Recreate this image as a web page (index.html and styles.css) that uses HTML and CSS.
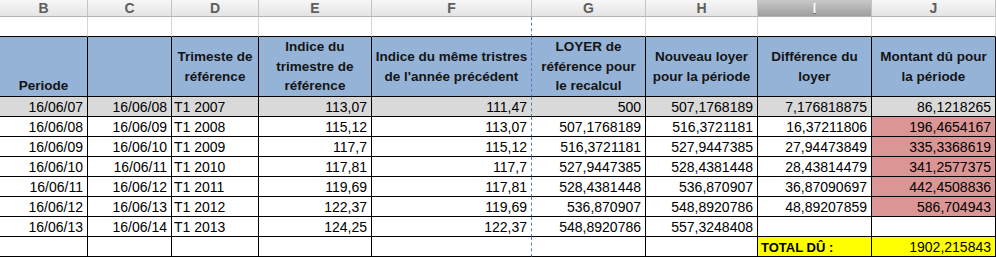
FILE: index.html
```html
<!DOCTYPE html>
<html lang="fr">
<head>
<meta charset="utf-8">
<title>Loyer</title>
<link rel="stylesheet" href="styles.css">
</head>
<body>
<div class="sheet">
  <div class="row colheads">
    <div class="ch">B</div><div class="ch">C</div><div class="ch">D</div><div class="ch">E</div><div class="ch">F</div><div class="ch">G</div><div class="ch">H</div><div class="ch sel">I</div><div class="ch">J</div>
  </div>
  <div class="row blank">
    <div class="c"></div><div class="c"></div><div class="c"></div><div class="c"></div><div class="c f"></div><div class="c"></div><div class="c"></div><div class="c"></div><div class="c"></div>
  </div>
  <div class="row head">
    <div class="h bottom">Periode</div>
    <div class="h"></div>
    <div class="h">Trimeste de référence</div>
    <div class="h">Indice du trimestre de référence</div>
    <div class="h f">Indice du même tristres de l'année précédent</div>
    <div class="h">LOYER de référence pour le recalcul</div>
    <div class="h">Nouveau loyer pour la période</div>
    <div class="h">Différence du loyer</div>
    <div class="h">Montant dû pour la période</div>
  </div>
  <div class="row data grey">
    <div class="d">16/06/07</div><div class="d">16/06/08</div><div class="d l">T1 2007</div><div class="d">113,07</div><div class="d f">111,47</div><div class="d">500</div><div class="d">507,1768189</div><div class="d">7,176818875</div><div class="d">86,1218265</div>
  </div>
  <div class="row data">
    <div class="d">16/06/08</div><div class="d">16/06/09</div><div class="d l">T1 2008</div><div class="d">115,12</div><div class="d f">113,07</div><div class="d">507,1768189</div><div class="d">516,3721181</div><div class="d">16,37211806</div><div class="d pink">196,4654167</div>
  </div>
  <div class="row data">
    <div class="d">16/06/09</div><div class="d">16/06/10</div><div class="d l">T1 2009</div><div class="d">117,7</div><div class="d f">115,12</div><div class="d">516,3721181</div><div class="d">527,9447385</div><div class="d">27,94473849</div><div class="d pink">335,3368619</div>
  </div>
  <div class="row data">
    <div class="d">16/06/10</div><div class="d">16/06/11</div><div class="d l">T1 2010</div><div class="d">117,81</div><div class="d f">117,7</div><div class="d">527,9447385</div><div class="d">528,4381448</div><div class="d">28,43814479</div><div class="d pink">341,2577375</div>
  </div>
  <div class="row data">
    <div class="d">16/06/11</div><div class="d">16/06/12</div><div class="d l">T1 2011</div><div class="d">119,69</div><div class="d f">117,81</div><div class="d">528,4381448</div><div class="d">536,870907</div><div class="d">36,87090697</div><div class="d pink">442,4508836</div>
  </div>
  <div class="row data">
    <div class="d">16/06/12</div><div class="d">16/06/13</div><div class="d l">T1 2012</div><div class="d">122,37</div><div class="d f">119,69</div><div class="d">536,870907</div><div class="d">548,8920786</div><div class="d">48,89207859</div><div class="d pink">586,704943</div>
  </div>
  <div class="row data">
    <div class="d">16/06/13</div><div class="d">16/06/14</div><div class="d l">T1 2013</div><div class="d">124,25</div><div class="d f">122,37</div><div class="d">548,8920786</div><div class="d">557,3248408</div><div class="d"></div><div class="d"></div>
  </div>
  <div class="row data">
    <div class="d"></div><div class="d"></div><div class="d"></div><div class="d"></div><div class="d f"></div><div class="d"></div><div class="d"></div><div class="d l yellow total">TOTAL DÛ :</div><div class="d yellow">1902,215843</div>
  </div>
</div>
</body>
</html>
```
FILE: styles.css
```css
html, body {
  margin: 0;
  padding: 0;
  background: #ffffff;
}

body {
  font-family: "Liberation Sans", Arial, sans-serif;
  color: #000;
}

.sheet {
  width: 996px;
  display: flex;
  flex-direction: column;
}

.row {
  display: grid;
  grid-template-columns: 88px 84px 87px 113px 160px 114px 112px 114px 124px;
  height: 20px;
}

.cell-base,
.ch, .c, .h, .d {
  box-sizing: border-box;
  display: flex;
  white-space: nowrap;
  overflow: hidden;
}

/* column letters */
.colheads {
  height: 17px;
}

.ch {
  align-items: center;
  justify-content: center;
  background: linear-gradient(#f7f7f7, #e4e4e4);
  border-right: 1px solid #c4c4c4;
  border-bottom: 1px solid #b4b4b4;
  color: #5e5e5e;
  font-weight: bold;
  font-size: 14px;
  line-height: 16px;
}

.ch.sel {
  background: linear-gradient(#c9c9c9, #9e9e9e);
  color: #fbfbfb;
  text-shadow: 0 1px 0 #6a6a6a;
}

/* empty row */
.blank .c {
  border-right: 1px solid #d6d6d6;
  border-bottom: 1px solid #000;
}

/* header */
.head {
  height: 60px;
}

.head .h {
  background: #95b3d7;
  border-right: 1px solid #000;
  border-bottom: 1px solid #000;
  align-items: center;
  justify-content: center;
  text-align: center;
  white-space: normal;
  font-weight: bold;
  font-size: 13.5px;
  line-height: 19.5px;
  color: #141414;
  padding: 0 3px;
}

.head .h.bottom {
  align-items: flex-end;
  padding-bottom: 1px;
}

/* data */
.d {
  border-right: 1px solid #000;
  border-bottom: 1px solid #000;
  align-items: flex-end;
  justify-content: flex-end;
  font-size: 14px;
  line-height: 17px;
  padding: 0 4px 0 2px;
}

.d.l {
  justify-content: flex-start;
}

.grey .d {
  background: #d9d9d9;
}

.pink {
  background: #da9694;
}

.yellow {
  background: #ffff00;
}

.d.total {
  font-weight: bold;
  font-size: 13px;
  padding-left: 3px;
}

/* page break between F and G */
.row > .f {
  border-right: 1px dashed #4d7fc4;
}
```
